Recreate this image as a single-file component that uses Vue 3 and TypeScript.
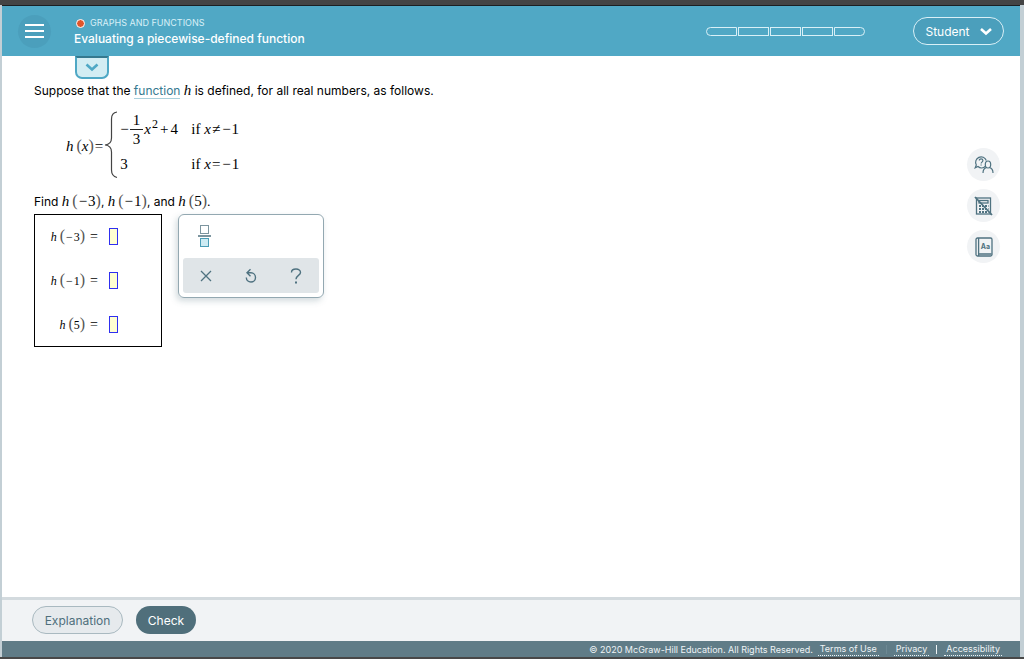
<script setup lang="ts">
import { ref } from 'vue'

interface Answer {
  id: string
  sign: string
  digit: string
  value: string
}

const answers = ref<Answer[]>([
  { id: 'h-neg-3', sign: '−', digit: '3', value: '' },
  { id: 'h-neg-1', sign: '−', digit: '1', value: '' },
  { id: 'h-5', sign: '', digit: '5', value: '' },
])

const progressSteps = 5

function clearAnswers(): void {
  answers.value.forEach((a) => (a.value = ''))
}
</script>

<template>
  <div class="page">
    <div class="frame">
      <header class="header">
        <button class="menu" type="button" aria-label="Menu">
          <svg width="20" height="16" viewBox="0 0 20 16">
            <path d="M0 2h19M0 8h19M0 14h19" stroke="#fff" stroke-width="2" fill="none" />
          </svg>
        </button>
        <div class="titles">
          <div class="topic"><span class="dot"></span>GRAPHS AND FUNCTIONS</div>
          <h1 class="title">Evaluating a piecewise-defined function</h1>
          <button class="tab" type="button" aria-label="Show details">
            <svg width="14" height="9" viewBox="0 0 14 9">
              <path d="M1.500 1.500l5.500 5 5.500-5" stroke="#4fa8c5" stroke-width="2.600" fill="none" />
            </svg>
          </button>
        </div>
        <div class="progress" aria-label="Progress">
          <span v-for="n in progressSteps" :key="n" class="step"></span>
        </div>
        <button class="student" type="button">
          Student
          <svg width="12" height="9" viewBox="0 0 12 9">
            <path d="M1 2l5 4.500L11 2" stroke="#fff" stroke-width="2.600" fill="none" />
          </svg>
        </button>
      </header>

      <main class="main">
        <section class="question">
          <p class="intro">
            Suppose that the <a href="#function">function</a> <i class="m">h</i> is defined, for all real numbers, as
            follows.
          </p>

          <div class="piecewise">
            <span class="lhs"><i>h</i><span class="call"><b>(</b><i>x</i><b>)</b></span><span class="op">=</span></span>
            <svg class="brace" width="14" height="68" viewBox="0 0 14 68">
              <path
                d="M13 1C9 1.500 7.500 4 7.500 8v19c0 4-1.500 6.500-6.500 7 5 .5 6.500 3 6.500 7v18c0 4 1.500 6.500 5.500 7.500"
                stroke="#444" stroke-width="1.200" fill="none"
              />
            </svg>
            <div class="cases">
              <span class="expr">
                <span>−</span>
                <span class="frac"><span class="num">1</span><span class="den">3</span></span>
                <span><i>x</i><sup>2</sup><span class="op">+</span>4</span>
              </span>
              <span>if <i>x</i><span class="op">≠</span><span class="op">−</span>1</span>
              <span>3</span>
              <span>if <i>x</i><span class="op">=</span><span class="op">−</span>1</span>
            </div>
          </div>

          <p class="find">
            Find <span class="m"><i>h</i><span class="call"><b>(</b><span class="op">−</span>3<b>)</b></span></span>,
            <span class="m"><i>h</i><span class="call"><b>(</b><span class="op">−</span>1<b>)</b></span></span>, and
            <span class="m"><i>h</i><span class="call"><b>(</b>5<b>)</b></span></span>.
          </p>

          <div class="work">
            <form class="answers" @submit.prevent>
              <div v-for="a in answers" :key="a.id" class="answer">
                <label :for="a.id"><i>h</i><span class="call"><b>(</b><span v-if="a.sign" class="op">{{ a.sign }}</span>{{ a.digit }}<b>)</b></span><span class="eq">=</span></label>
                <input :id="a.id" v-model="a.value" type="text" autocomplete="off" />
              </div>
            </form>

            <div class="palette">
              <button class="fraction" type="button" aria-label="Fraction">
                <svg width="14" height="24" viewBox="0 0 14 24">
                  <rect x="2.500" y="1.500" width="8" height="8" fill="#fff" stroke="#7c959f" />
                  <path d="M0 12h13" stroke="#7c959f" stroke-width="2" />
                  <rect x="2.500" y="14.500" width="8" height="8" fill="#cdebf3" stroke="#4a9db6" />
                </svg>
              </button>
              <div class="tools">
                <button type="button" aria-label="Clear" @click="clearAnswers">
                  <svg width="12" height="12" viewBox="0 0 12 12">
                    <path d="M1 1l10 10M11 1L1 11" stroke="#4f7280" stroke-width="1.300" fill="none" />
                  </svg>
                </button>
                <button type="button" aria-label="Undo">
                  <svg width="12" height="16" viewBox="0 0 12 16">
                    <path
                      d="M1.300 9.500a4.600 4.600 0 1 0 4.700-4.700H2M5.500 1.300L2 4.800l3.500 3.500"
                      stroke="#4f7280" stroke-width="1.400" fill="none"
                    />
                  </svg>
                </button>
                <button type="button" aria-label="Help">
                  <svg width="12" height="16" viewBox="0 0 12 16">
                    <path
                      d="M1.500 4.500C1.500 2.300 3.300 1 6 1s4.500 1.400 4.500 3.500C10.500 7.500 6 7.300 6 11.300"
                      stroke="#4f7280" stroke-width="1.400" fill="none"
                    />
                    <rect x="5" y="13.500" width="2" height="2" fill="#4f7280" />
                  </svg>
                </button>
              </div>
            </div>
          </div>
        </section>

        <aside class="side">
          <button type="button" aria-label="Ask for help">
            <svg width="20" height="20" viewBox="0 0 20 20" fill="none" stroke="#4f7280" stroke-width="1.200">
              <path d="M11.500 11.300A5.500 5.500 0 0 1 4 11.500L1.200 12.800 2.300 10A5.500 5.500 0 1 1 12.300 5.500" />
              <path d="M5.300 5.600c0-2.400 3.600-2.300 3.600 0 0 1.600-1.800 1.500-1.800 3M7.100 9.600v1" />
              <ellipse cx="14" cy="9.500" rx="2.700" ry="3.500" />
              <path d="M12.500 12.500c-2.600.8-3.500 2-3.500 5.500M15.500 12.500c2.600.8 3.500 2 3.500 5.500" />
            </svg>
          </button>
          <button type="button" aria-label="Calculator unavailable">
            <svg width="20" height="20" viewBox="0 0 20 20" fill="none" stroke="#4f7280" stroke-width="1.300">
              <rect x="2.500" y="2" width="14" height="16" />
              <rect x="5" y="4.500" width="9" height="2.500" />
              <path d="M5 10h9.500M5 13h9.500M5 16h9.500" stroke-width="2" stroke-dasharray="2 1" />
              <path d="M1 1l17 18" stroke-width="1.800" />
            </svg>
          </button>
          <button type="button" aria-label="Dictionary">
            <svg width="20" height="20" viewBox="0 0 20 20" fill="none" stroke="#4f7280" stroke-width="1.300">
              <rect x="2" y="1" width="16" height="18" rx="1.500" />
              <path d="M4.600 1v18M4.600 17h13" />
              <text x="11.500" y="12" text-anchor="middle" class="aa">Aa</text>
            </svg>
          </button>
        </aside>
      </main>

      <div class="actions">
        <button class="pill light" type="button">Explanation</button>
        <button class="pill dark" type="button">Check</button>
      </div>

      <footer class="footer">
        <span class="copy">© 2020 McGraw-Hill Education. All Rights Reserved.</span>
        <a href="#terms">Terms of Use</a>
        <span class="sep faint"></span>
        <a href="#privacy">Privacy</a>
        <span class="sep"></span>
        <a href="#accessibility">Accessibility</a>
      </footer>
    </div>
  </div>
</template>

<style>
body {
  margin: 0;
}
</style>

<style scoped>
* {
  box-sizing: border-box;
}

button {
  padding: 0;
  border: 0;
  font: inherit;
  cursor: pointer;
  display: flex;
  align-items: center;
  justify-content: center;
}

.page {
  min-height: 100vh;
  display: flex;
  flex-direction: column;
  border-top: 5px solid #444;
  border-bottom: 2px solid #484848;
  font-family: Inter, Verdana, sans-serif;
  font-size: 12px;
  color: #000;
}

.frame {
  flex: 1;
  display: flex;
  flex-direction: column;
  border-left: 2px solid #c3cfd5;
  border-right: 4px solid #c3cfd5;
}

.header {
  display: flex;
  align-items: center;
  height: 51px;
  padding: 0 16px;
  border-top: 1px solid #1c1f21;
  background: #50a8c5;
  color: #fff;
}

.menu {
  width: 33px;
  height: 33px;
  border-radius: 50%;
  background: #4b9fbc;
}

.titles {
  position: relative;
  align-self: stretch;
  flex: 1;
  margin-left: 23px;
  padding-top: 10px;
}

.topic {
  display: flex;
  align-items: center;
  gap: 5px;
  padding-left: 2px;
  font-size: 9px;
  line-height: 14px;
  color: #d8f0f7;
}

.dot {
  width: 9px;
  height: 9px;
  border: 1px solid #fff;
  border-radius: 50%;
  background: #e0552b;
}

.title {
  margin: 0;
  font-size: 12px;
  line-height: 18px;
  font-weight: 500;
}

.tab {
  position: absolute;
  top: 50px;
  left: 1px;
  width: 34px;
  height: 23px;
  border: 2px solid #4fa8c5;
  border-top-color: #35798f;
  border-radius: 0 0 7px 7px;
  background: #d3edf3;
}

.progress {
  display: flex;
  gap: 1px;
  margin-right: 48px;
}

.step {
  width: 31px;
  height: 9px;
  border: 1px solid #d9f0f7;
}

.step:first-child {
  border-radius: 5px 0 0 5px;
}

.step:last-child {
  border-radius: 0 5px 5px 0;
}

.student {
  gap: 10px;
  width: 91px;
  height: 28px;
  border: 1px solid #d9f0f7;
  border-radius: 14px;
  background: #4b9fbc;
  color: #fff;
}

.main {
  flex: 1;
  display: flex;
  justify-content: space-between;
  padding: 26px 20px 0 32px;
}

p {
  margin: 0;
  line-height: 16px;
}

.intro a {
  color: #35798f;
  text-decoration: none;
  border-bottom: 1px solid #a9d0dc;
}

.m,
.piecewise,
.answers {
  font-family: 'Liberation Serif', 'Times New Roman', serif;
}

.m {
  font-size: 15px;
}

.call {
  margin-left: 3px;
}

.call b {
  font-weight: 400;
  font-size: 16px;
  color: #555;
}

.op {
  margin: 0 1px;
}

.piecewise {
  display: flex;
  align-items: center;
  margin: 12px 0 12px 32px;
  font-size: 15px;
}

.brace {
  margin: 0 2px 2px 0;
}

.cases {
  display: grid;
  grid-template-columns: 71px auto;
  grid-template-rows: 36px 34px;
  align-items: center;
}

.expr {
  display: flex;
  align-items: center;
}

.frac {
  display: flex;
  flex-direction: column;
  margin: 0 1px;
  text-align: center;
  line-height: 18px;
}

.num {
  padding: 0 3px;
  border-bottom: 1px solid #222;
}

sup {
  margin-left: 1px;
  font-size: 12px;
  line-height: 0;
}

.expr .op {
  margin: 0 2px;
}

.work {
  display: flex;
  align-items: flex-start;
  gap: 16px;
  margin-top: 4px;
}

.answers {
  display: flex;
  flex-direction: column;
  gap: 22px;
  width: 128px;
  padding: 10px 43px 11px 0;
  border: 1px solid #000;
  font-size: 12px;
}

.answer {
  display: flex;
  align-items: center;
  justify-content: flex-end;
  height: 22px;
}

.eq {
  margin: 0 11px 0 5px;
  font-size: 14px;
}

.answer input {
  width: 9px;
  height: 17px;
  padding: 0;
  border: 1px solid #2f2ff0;
  background: #ffffd2;
  font-size: 12px;
  outline: none;
}

.palette {
  width: 146px;
  padding: 9px 4px 4px;
  border: 1px solid #93a8b1;
  border-radius: 6px;
  box-shadow: -2px 3px 6px rgba(80, 110, 125, 0.25);
}

.fraction {
  margin: 0 0 10px 15px;
  background: transparent;
}

.tools {
  display: grid;
  grid-template-columns: repeat(3, 1fr);
  height: 35px;
  border-radius: 3px;
  background: #e0e5e8;
}

.tools button {
  background: transparent;
}

.side {
  display: flex;
  flex-direction: column;
  gap: 8px;
  padding-top: 66px;
}

.side button {
  width: 33px;
  height: 33px;
  border-radius: 50%;
  background: #f1f3f5;
}

.aa {
  font: 700 7px Inter, sans-serif;
  fill: #4f7280;
  stroke: none;
}

.actions {
  display: flex;
  gap: 13px;
  padding: 6px 30px 7px;
  border-top: 3px solid #d3dade;
  background: #f1f3f5;
}

.pill {
  height: 28px;
  border-radius: 14px;
}

.light {
  width: 91px;
  border: 1px solid #a9b9c0;
  background: #e6eaed;
  color: #4f6f7c;
}

.dark {
  width: 60px;
  background: #506f7b;
  color: #fff;
}

.footer {
  display: flex;
  align-items: center;
  justify-content: flex-end;
  height: 16px;
  padding: 0 18px 0 30px;
  background: #607c87;
  color: #eef3f5;
  font-size: 9px;
}

.copy {
  margin-right: 5px;
}

.footer a {
  padding: 0 2px;
  line-height: 13px;
  color: inherit;
  text-decoration: none;
  border-bottom: 1px dotted #eef3f5;
}

.sep {
  width: 1px;
  height: 9px;
  margin: 0 7px;
  background: #eef3f5;
}

.faint {
  background: #6d8893;
}
</style>
